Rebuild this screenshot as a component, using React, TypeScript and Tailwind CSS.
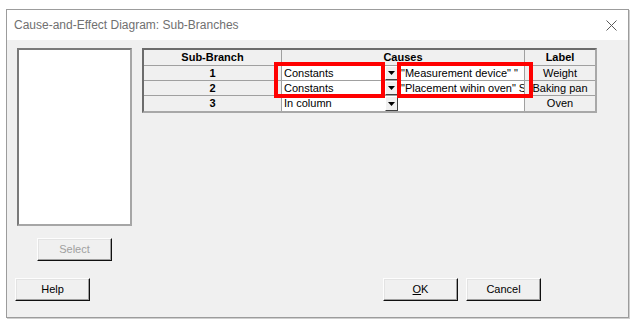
import React from 'react'

const rows = [
  { n: '1', mode: 'Constants', value: '"Measurement device" "', label: 'Weight' },
  { n: '2', mode: 'Constants', value: '"Placement wihin oven" Size', label: 'Baking pan' },
  { n: '3', mode: 'In column', value: '', label: 'Oven' },
]

function WinButton({ children, disabled, className = '' }: { children: React.ReactNode; disabled?: boolean; className?: string }) {
  return (
    <div
      className={`h-[23px] w-[75px] flex items-center justify-center bg-[#f0f0f0] border-t border-l border-[#fdfdfd] border-r border-b border-r-[#101010] border-b-[#101010] shadow-[inset_-1px_-1px_0_#a0a0a0,inset_1px_1px_0_#e3e3e3] ${disabled ? 'text-[#a0a0a0]' : 'text-black'} ${className}`}
    >
      {children}
    </div>
  )
}

function DropButton() {
  return (
    <div className="h-full w-[13px] flex items-center justify-center bg-[#f0f0f0] border-t border-l border-white border-r border-b border-r-[#404040] border-b-[#404040]">
      <svg width="7" height="4" viewBox="0 0 7 4">
        <path d="M0 0h7L3.5 4z" fill="#000" />
      </svg>
    </div>
  )
}

export default function App() {
  return (
    <div className="relative w-[636px] h-[326px] bg-white overflow-hidden text-[11px] text-black font-['Liberation_Sans',Arial,sans-serif]">
      {/* Dialog window */}
      <div className="ml-[6px] mt-[9px] w-[623px] h-[309px] flex flex-col border border-[#9c9c9c] bg-[#f0f0f0] shadow-[1px_1px_0_#cfcfcf]">
        {/* Title bar */}
        <div className="h-[30px] bg-white flex items-center justify-between pl-[7px] pr-[11px]">
          <span className="text-[12px] text-[#707070]">Cause-and-Effect Diagram: Sub-Branches</span>
          <svg width="11" height="11" viewBox="0 0 11 11">
            <path d="M0.5 0.5l10 10M10.5 0.5l-10 10" stroke="#5a5a5a" strokeWidth="1" fill="none" />
          </svg>
        </div>

        {/* Body */}
        <div className="flex-1 flex flex-col pt-[8px]">
          <div className="flex pl-[10px]">
            {/* Variable list + Select */}
            <div className="flex flex-col w-[115px]">
              <div className="h-[178px] bg-white border-2 border-t-[#7a7a7a] border-l-[#7a7a7a] border-r-[#a6a6a6] border-b-[#a6a6a6]" />
              <WinButton disabled className="mt-[12px] ml-[20px]">Select</WinButton>
            </div>

            {/* Grid */}
            <div className="ml-[10px] w-[455px] self-start border-2 border-t-[#6c6c6c] border-l-[#6c6c6c] border-r-[#a8a8a8] border-b-[#a8a8a8] bg-[#f0f0f0]">
              <div className="flex h-[16px] font-bold border-b border-[#a0a0a0]">
                <div className="w-[138px] flex items-center justify-center border-r border-[#a0a0a0]">Sub-Branch</div>
                <div className="w-[243px] flex items-center justify-center border-r border-[#a0a0a0]">Causes</div>
                <div className="w-[70px] flex items-center justify-center">Label</div>
              </div>
              {rows.map((r) => (
                <div key={r.n} className="flex h-[15px] border-b border-[#a0a0a0] last:border-b-0">
                  <div className="w-[138px] flex items-center justify-center font-bold border-r border-[#a0a0a0]">{r.n}</div>
                  <div className="w-[103px] bg-white pl-[2px] flex items-center overflow-hidden whitespace-nowrap">{r.mode}</div>
                  <DropButton />
                  <div className="w-[127px] bg-white pl-[3px] flex items-center overflow-hidden whitespace-nowrap border-r border-[#a0a0a0]">{r.value}</div>
                  <div className="w-[70px] flex items-center justify-center whitespace-nowrap">{r.label}</div>
                </div>
              ))}
            </div>
          </div>

          {/* Bottom buttons */}
          <div className="flex mt-[17px] pl-[8px]">
            <WinButton>Help</WinButton>
            <WinButton className="ml-[293px]">
              <span className="underline">O</span>K
            </WinButton>
            <WinButton className="ml-[8px]">Cancel</WinButton>
          </div>
        </div>
      </div>

      {/* Highlight boxes */}
      <div className="absolute left-[274px] top-[62px] w-[111px] h-[36px] border-4 border-[#ff0000]" />
      <div className="absolute left-[397px] top-[62px] w-[136px] h-[36px] border-4 border-[#ff0000]" />
    </div>
  )
}
